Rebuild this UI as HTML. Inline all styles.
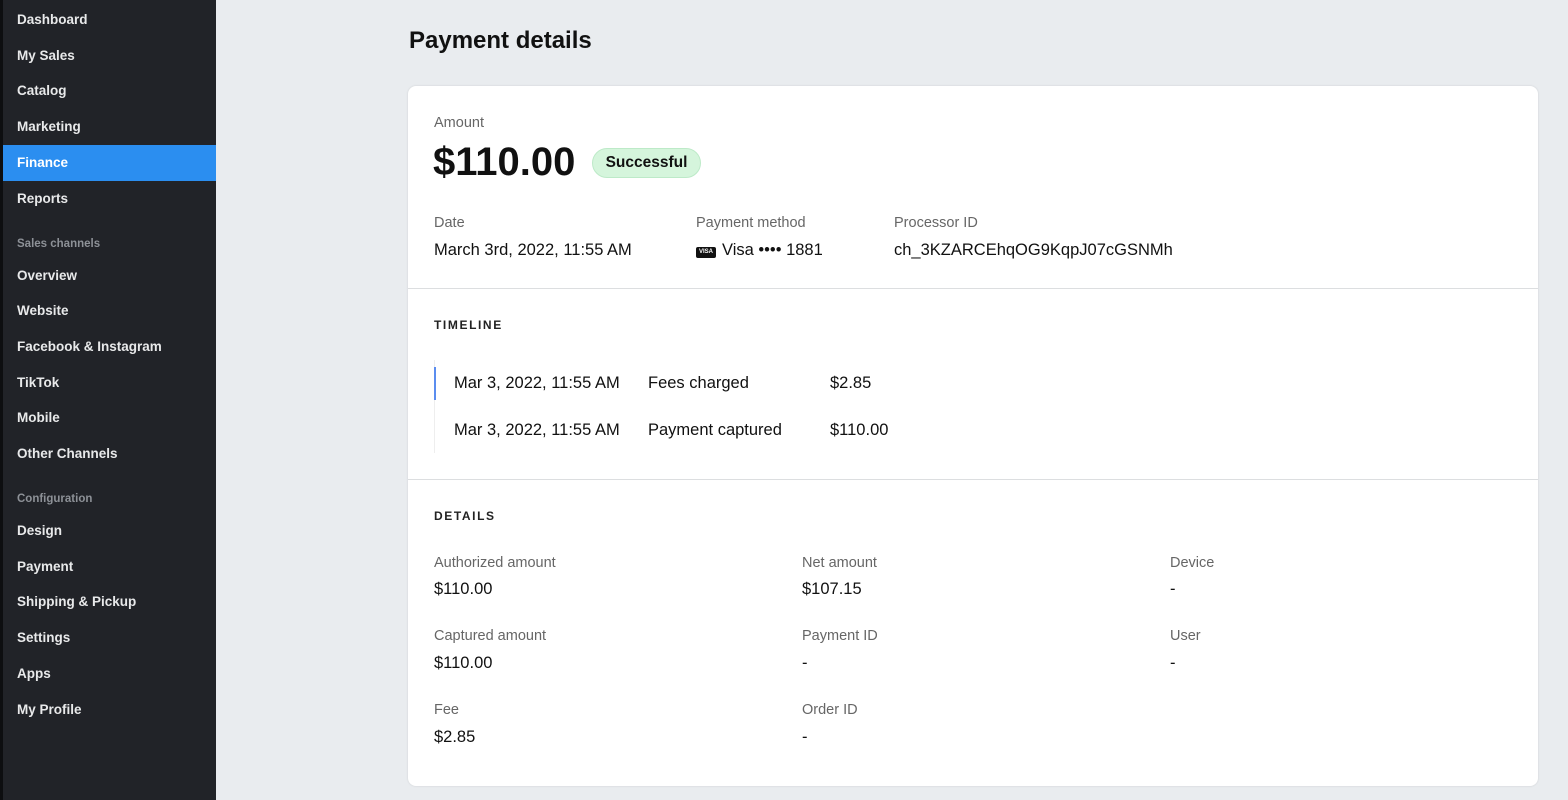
<!DOCTYPE html>
<html><head><style>
*{margin:0;padding:0;box-sizing:border-box}
body{width:1568px;height:800px;background:#e9ecef;font-family:"Liberation Sans",sans-serif;position:relative;overflow:hidden;color:#111}
.sb{position:absolute;left:0;top:0;width:216px;height:800px;background:#212328;border-left:3px solid #0d0e10}
.sb div{position:absolute;left:14px;color:#e8e9ea;font-weight:bold;font-size:13.5px}
.sb .h{color:#8d9197;font-size:11.5px;font-weight:bold}
.sb .act{left:0;width:213px;height:36px;background:#2b8ef0;color:#fff;padding:10px 14px;line-height:16px}
.t{position:absolute;white-space:nowrap}
.lbl{color:#666;font-size:14.5px}
.val{color:#111;font-size:16.5px}
.card{position:absolute;left:408px;top:86px;width:1130px;height:700px;background:#fff;border-radius:8px;box-shadow:0 0 2px rgba(0,0,0,.12)}
.hr{position:absolute;left:408px;width:1130px;height:1px;background:#dcdee0}
.sec{font-size:12px;font-weight:bold;letter-spacing:1.6px;color:#222}
</style></head><body>
<div class="sb">
<div style="top:12px">Dashboard</div>
<div style="top:48px">My Sales</div>
<div style="top:83px">Catalog</div>
<div style="top:119px">Marketing</div>
<div class="act" style="top:145px">Finance</div>
<div style="top:191px">Reports</div>
<div class="h" style="top:238px">Sales channels</div>
<div style="top:268px">Overview</div>
<div style="top:303px">Website</div>
<div style="top:339px">Facebook &amp; Instagram</div>
<div style="top:375px">TikTok</div>
<div style="top:410px">Mobile</div>
<div style="top:446px">Other Channels</div>
<div class="h" style="top:493px">Configuration</div>
<div style="top:523px">Design</div>
<div style="top:559px">Payment</div>
<div style="top:594px">Shipping &amp; Pickup</div>
<div style="top:630px">Settings</div>
<div style="top:666px">Apps</div>
<div style="top:702px">My Profile</div>
</div>
<div class="t" style="left:409px;top:27px;font-size:24px;font-weight:bold">Payment details</div>
<div class="card"></div>
<div class="hr" style="top:288px"></div>
<div class="hr" style="top:479px"></div>
<div class="t lbl" style="left:434px;top:115px">Amount</div>
<div class="t" style="left:433px;top:140px;font-size:40px;font-weight:bold">$110.00</div>
<div class="t" style="left:592px;top:148px;width:109px;height:30px;border-radius:15px;background:#d5f5dc;border:1px solid #bdeac8;font-size:15.5px;font-weight:bold;text-align:center;line-height:28px">Successful</div>
<div class="t lbl" style="left:434px;top:215px">Date</div>
<div class="t val" style="left:434px;top:241px">March 3rd, 2022, 11:55 AM</div>
<div class="t lbl" style="left:696px;top:215px">Payment method</div>
<div class="t" style="left:696px;top:247px;width:20px;height:11px;background:#111;border-radius:2px;color:#fff;font-size:6px;font-weight:bold;text-align:center;line-height:11px">VISA</div>
<div class="t val" style="left:722px;top:241px">Visa •••• 1881</div>
<div class="t lbl" style="left:894px;top:215px">Processor ID</div>
<div class="t val" style="left:894px;top:241px">ch_3KZARCEhqOG9KqpJ07cGSNMh</div>
<div class="t sec" style="left:434px;top:318px">TIMELINE</div>
<div class="t" style="left:434px;top:360px;width:1px;height:93px;background:#eee"></div>
<div class="t" style="left:434px;top:367px;width:2px;height:33px;background:#5b8def"></div>
<div class="t val" style="left:454px;top:374px">Mar 3, 2022, 11:55 AM</div>
<div class="t val" style="left:648px;top:374px">Fees charged</div>
<div class="t val" style="left:830px;top:374px">$2.85</div>
<div class="t val" style="left:454px;top:421px">Mar 3, 2022, 11:55 AM</div>
<div class="t val" style="left:648px;top:421px">Payment captured</div>
<div class="t val" style="left:830px;top:421px">$110.00</div>
<div class="t sec" style="left:434px;top:509px">DETAILS</div>
<div class="t lbl" style="left:434px;top:555px">Authorized amount</div>
<div class="t val" style="left:434px;top:580px">$110.00</div>
<div class="t lbl" style="left:802px;top:555px">Net amount</div>
<div class="t val" style="left:802px;top:580px">$107.15</div>
<div class="t lbl" style="left:1170px;top:555px">Device</div>
<div class="t val" style="left:1170px;top:580px">-</div>
<div class="t lbl" style="left:434px;top:628px">Captured amount</div>
<div class="t val" style="left:434px;top:654px">$110.00</div>
<div class="t lbl" style="left:802px;top:628px">Payment ID</div>
<div class="t val" style="left:802px;top:654px">-</div>
<div class="t lbl" style="left:1170px;top:628px">User</div>
<div class="t val" style="left:1170px;top:654px">-</div>
<div class="t lbl" style="left:434px;top:702px">Fee</div>
<div class="t val" style="left:434px;top:728px">$2.85</div>
<div class="t lbl" style="left:802px;top:702px">Order ID</div>
<div class="t val" style="left:802px;top:728px">-</div>
</body></html>
